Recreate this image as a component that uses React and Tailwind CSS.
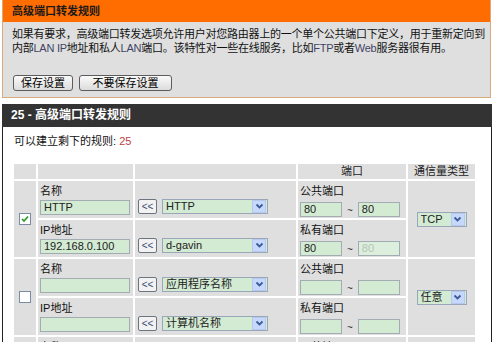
const FONT = { fontFamily: '"Liberation Sans", "Noto Sans CJK SC", sans-serif' };

const rules = [
  {
    checked: true,
    name: "HTTP",
    app: "HTTP",
    ip: "192.168.0.100",
    pc: "d-gavin",
    pub: ["80", "80"],
    priv: ["80", "80"],
    type: "TCP",
  },
  { checked: false, name: "", app: "应用程序名称", ip: "", pc: "计算机名称", pub: ["", ""], priv: ["", ""], type: "任意" },
  { checked: false, name: "", app: "应用程序名称", ip: "", pc: "计算机名称", pub: ["", ""], priv: ["", ""], type: "任意" },
];

function Arrow() {
  return (
    <span className="flex h-[13px] w-[14px] shrink-0 items-center justify-center border border-[#b6c8ee] bg-[#c6d8fb]">
      <svg width="9" height="7" viewBox="0 0 9 7">
        <path d="M1.5 1.5 L4.5 4.5 L7.5 1.5" fill="none" stroke="#3d5a96" strokeWidth="1.8" />
      </svg>
    </span>
  );
}

function Select({ value, width }) {
  return (
    <div
      className={`flex h-[15px] items-center border border-[#9aa7b8] bg-[#d3ebd3] pl-[3px] pr-[1px] text-[11px] leading-[13px] text-[#222] ${width}`}
    >
      <span className="flex-1 truncate">{value}</span>
      <Arrow />
    </div>
  );
}

function Field({ value, width, disabled }) {
  return (
    <div
      className={`h-[15px] border border-[#a3abb3] px-[3px] text-[11px] leading-[13px] ${width} ${
        disabled ? "bg-[#dcefdc] text-[#b8c4b8]" : "bg-[#d3ebd3] text-[#222]"
      }`}
    >
      {value}
    </div>
  );
}

function CopyBtn() {
  return (
    <div className="flex h-[15px] w-[19px] items-center justify-center rounded-[2px] border border-[#6b7480] bg-[#f2f2f2] text-[10px] leading-none text-[#3b4a70]">
      &lt;&lt;
    </div>
  );
}

function Checkbox({ checked }) {
  return (
    <span className="flex h-[12px] w-[12px] items-center justify-center border border-[#7a8ba3] bg-white">
      {checked && (
        <svg width="8" height="8" viewBox="0 0 8 8">
          <path d="M1 4 L3 6 L7 1.5" fill="none" stroke="#2a9a2a" strokeWidth="1.7" />
        </svg>
      )}
    </span>
  );
}

function SubRow({ label, children }) {
  return (
    <div className="flex h-[37px] flex-col bg-[#dfdfdf] px-[2px] pt-[3px]">
      <div className="h-[14px] text-[11px] leading-[14px] text-[#111]">{label}</div>
      <div className="mt-[2px] flex items-center">{children}</div>
    </div>
  );
}

function PortPair({ label, values, dimSecond }) {
  return (
    <SubRow label={label}>
      <Field value={values[0]} width="w-[42px]" />
      <span className="mx-[5px] pt-[3px] text-[10px] text-[#333]">~</span>
      <Field value={values[1]} width="w-[42px]" disabled={dimSecond} />
    </SubRow>
  );
}

function RuleRows({ r }) {
  return (
    <>
      <div className="row-span-2 flex items-center justify-center bg-[#dfdfdf]">
        <Checkbox checked={r.checked} />
      </div>
      <SubRow label="名称">
        <Field value={r.name} width="w-[90px]" />
      </SubRow>
      <div className="flex h-[37px] items-end gap-[5px] bg-[#dfdfdf] pb-[4px] pl-[3px]">
        <CopyBtn />
        <Select value={r.app} width="w-[106px]" />
      </div>
      <PortPair label="公共端口" values={r.pub} />
      <div className="row-span-2 flex items-center justify-center bg-[#dfdfdf]">
        <Select value={r.type} width="w-[50px]" />
      </div>
      <SubRow label="IP地址">
        <Field value={r.ip} width="w-[90px]" />
      </SubRow>
      <div className="flex h-[37px] items-end gap-[5px] bg-[#dfdfdf] pb-[4px] pl-[3px]">
        <CopyBtn />
        <Select value={r.pc} width="w-[106px]" />
      </div>
      <PortPair label="私有端口" values={r.priv} dimSecond={r.checked} />
    </>
  );
}

export default function App() {
  return (
    <div className="h-[342px] w-[493px] overflow-hidden bg-white text-black" style={FONT}>
      {/* top box */}
      <div className="ml-[2px] h-[98px] w-[489px] border-x border-b border-[#d9aa7c] bg-[#dfdfdf]">
        <div className="h-[22px] bg-[#ff6c00] px-[9px] text-[11px] font-bold leading-[22px] text-[#1a1a1a]">
          高级端口转发规则
        </div>
        <p className="whitespace-nowrap px-[9px] pt-[5px] text-[11px] leading-[14px] tracking-[-0.25px] text-[#111]">
          如果有要求，高级端口转发选项允许用户对您路由器上的一个单个公共端口下定义，用于重新定向到
          <br />
          内部<span className="text-[#3f4466]">LAN IP</span>地址和私人<span className="text-[#3f4466]">LAN</span>
          端口。该特性对一些在线服务，比如<span className="text-[#3f4466]">FTP</span>或者
          <span className="text-[#3f4466]">Web</span>服务器很有用。
        </p>
        <div className="mt-[20px] flex gap-[6px] px-[10px]">
          <button
            type="button"
            className="h-[16px] w-[60px] rounded-[3px] border border-[#5c5c5c] bg-gradient-to-b from-[#fafafa] to-[#dcdcdc] text-[11px] leading-[13px]"
          >
            保存设置
          </button>
          <button
            type="button"
            className="h-[16px] w-[93px] rounded-[3px] border border-[#5c5c5c] bg-gradient-to-b from-[#fafafa] to-[#dcdcdc] text-[11px] leading-[13px]"
          >
            不要保存设置
          </button>
        </div>
      </div>

      {/* rules section */}
      <div className="ml-[2px] mt-[6px] w-[490px]">
        <div className="h-[23px] bg-[#333333] px-[9px] text-[12px] font-bold leading-[23px] text-white">
          25 - 高级端口转发规则
        </div>
        <div className="border-x border-[#222] pl-[11px] pt-[7px] pb-[20px]">
          <div className="text-[11px] leading-[14px] text-[#111]">
            可以建立剩下的规则: <span className="text-[#c0403f]">25</span>
          </div>
          <div className="mt-[16px] grid grid-cols-[22px_95px_161px_108px_67px] gap-[2px]">
            <div className="h-[15px] bg-[#dfdfdf]" />
            <div className="h-[15px] bg-[#dfdfdf]" />
            <div className="h-[15px] bg-[#dfdfdf]" />
            <div className="h-[15px] bg-[#dfdfdf] text-center text-[11px] leading-[15px] text-[#222]">端口</div>
            <div className="h-[15px] bg-[#dfdfdf] text-center text-[11px] leading-[15px] text-[#222]">通信量类型</div>
            {rules.map((r, i) => (
              <RuleRows key={i} r={r} />
            ))}
          </div>
        </div>
      </div>
    </div>
  );
}
